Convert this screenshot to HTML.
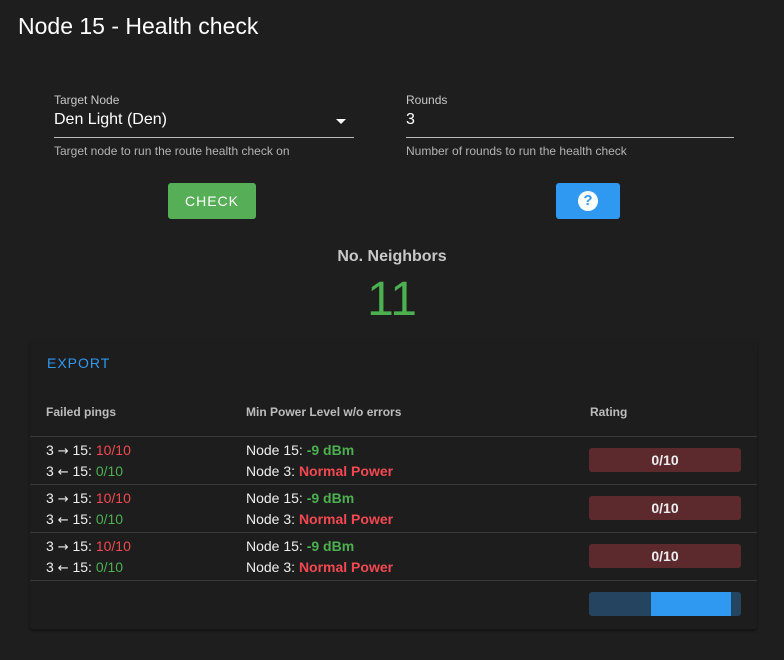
<!DOCTYPE html>
<html><head><style>
body{margin:0;width:784px;height:660px;background:#1e1e1e;font-family:"Liberation Sans",sans-serif;color:#fff;position:relative;overflow:hidden}
.a{position:absolute;white-space:nowrap}
.lbl{font-size:12px;color:#c8c8c8}
.hint{font-size:12px;color:#b4b4b4}
.line{position:absolute;height:1px;background:#bbb}
.r{color:#f44850}.g{color:#4caf50}
.t{font-size:14px;color:#eee}
.ar{font-family:"DejaVu Sans",sans-serif;font-size:13px}
.th{font-size:12px;font-weight:bold;color:#bdbdbd}
.div{position:absolute;left:30px;width:727px;height:1px;background:#3a3a3a}
.badge{position:absolute;left:589px;width:152px;height:24px;background:#5c2a2d;border-radius:3px;color:#eee;font-weight:bold;font-size:14px;text-align:center;line-height:24px}
</style></head><body>
<div class="a" style="left:18px;top:13px;font-size:23px">Node 15 - Health check</div>
<div class="a lbl" style="left:54px;top:93px">Target Node</div>
<div class="a" style="left:54px;top:111px;font-size:16px">Den Light (Den)</div>
<div class="a" style="left:336px;top:119px;width:0;height:0;border-left:5px solid transparent;border-right:5px solid transparent;border-top:5px solid #fff"></div>
<div class="line" style="left:54px;top:137px;width:300px"></div>
<div class="a hint" style="left:54px;top:144px">Target node to run the route health check on</div>
<div class="a lbl" style="left:406px;top:93px">Rounds</div>
<div class="a" style="left:406px;top:111px;font-size:16px">3</div>
<div class="line" style="left:406px;top:137px;width:328px"></div>
<div class="a hint" style="left:406px;top:144px">Number of rounds to run the health check</div>
<div class="a" style="left:168px;top:183px;width:88px;height:36px;background:#56ae57;border-radius:3px;text-align:center;line-height:36px;font-size:14px;letter-spacing:1px">CHECK</div>
<div class="a" style="left:556px;top:183px;width:64px;height:36px;background:#2f98f0;border-radius:3px">
<div style="position:absolute;left:22px;top:8px;width:20px;height:20px;border-radius:50%;background:#fff;color:#2f98f0;font-weight:bold;font-size:15px;text-align:center;line-height:20px">?</div></div>
<div class="a" style="left:0;width:784px;text-align:center;top:248px;font-size:16px;font-weight:bold;color:#c8c8c8">No. Neighbors</div>
<div class="a" style="left:0;width:784px;text-align:center;top:272px;font-size:48px;color:#4caf50">11</div>
<div class="a" style="left:30px;top:340px;width:727px;height:289px;background:#1d1d1d;box-shadow:0 2px 3px rgba(0,0,0,.4);border-radius:3px"></div>
<div class="a" style="left:47px;top:355px;font-size:14px;color:#2f98f0;letter-spacing:1px">EXPORT</div>
<div class="a th" style="left:46px;top:405px">Failed pings</div>
<div class="a th" style="left:246px;top:405px">Min Power Level w/o errors</div>
<div class="a th" style="left:590px;top:405px">Rating</div>
<div class="div" style="top:436px"></div>
<div class="div" style="top:484px"></div>
<div class="div" style="top:532px"></div>
<div class="div" style="top:580px"></div>
<div class="a t" style="left:46px;top:442px">3 <span class="ar">→</span> 15: <span class="r">10/10</span></div>
<div class="a t" style="left:46px;top:463px">3 <span class="ar">←</span> 15: <span class="g">0/10</span></div>
<div class="a t" style="left:246px;top:442px">Node 15: <b class="g">-9 dBm</b></div>
<div class="a t" style="left:246px;top:463px">Node 3: <b class="r">Normal Power</b></div>
<div class="badge" style="top:448px">0/10</div>
<div class="a t" style="left:46px;top:490px">3 <span class="ar">→</span> 15: <span class="r">10/10</span></div>
<div class="a t" style="left:46px;top:511px">3 <span class="ar">←</span> 15: <span class="g">0/10</span></div>
<div class="a t" style="left:246px;top:490px">Node 15: <b class="g">-9 dBm</b></div>
<div class="a t" style="left:246px;top:511px">Node 3: <b class="r">Normal Power</b></div>
<div class="badge" style="top:496px">0/10</div>
<div class="a t" style="left:46px;top:538px">3 <span class="ar">→</span> 15: <span class="r">10/10</span></div>
<div class="a t" style="left:46px;top:559px">3 <span class="ar">←</span> 15: <span class="g">0/10</span></div>
<div class="a t" style="left:246px;top:538px">Node 15: <b class="g">-9 dBm</b></div>
<div class="a t" style="left:246px;top:559px">Node 3: <b class="r">Normal Power</b></div>
<div class="badge" style="top:544px">0/10</div>
<div class="a" style="left:589px;top:592px;width:152px;height:24px;background:#24445f;border-radius:3px;overflow:hidden"><div style="position:absolute;left:62px;width:80px;height:24px;background:#2f98f0"></div></div>
</body></html>
